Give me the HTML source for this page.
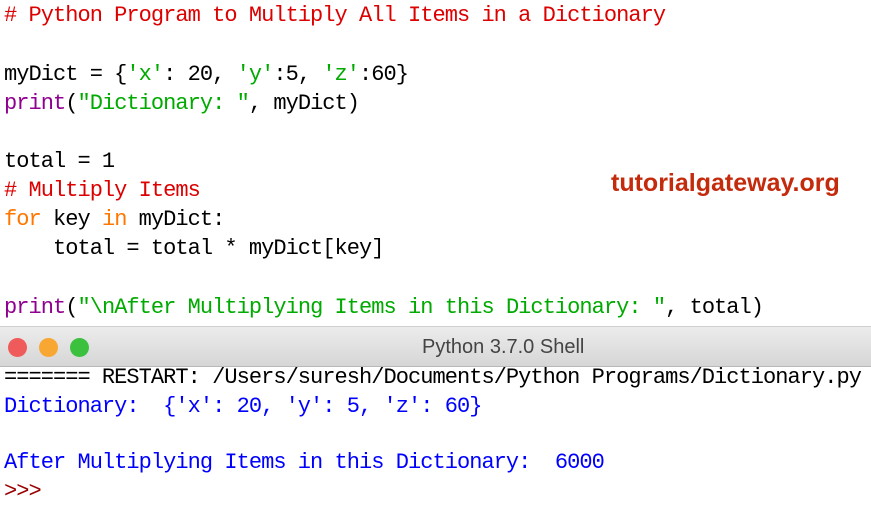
<!DOCTYPE html><html><head><style>
body{margin:0;width:871px;height:495px;overflow:hidden;background:#fff;position:relative;font-family:"Liberation Mono",monospace;font-size:22px;letter-spacing:-0.96px}
.l{position:absolute;left:4px;white-space:pre;line-height:29px}
.r{color:#dd0000}.k{color:#ff7700}.g{color:#00aa00}.p{color:#900090}.b{color:#0000ff}.d{color:#990000}
#bar{position:absolute;left:0;top:326px;width:871px;height:39px;background:linear-gradient(#ececec,#d6d6d6);border-top:1px solid #cfcfcf;border-bottom:1px solid #b8b8b8;letter-spacing:0}
.dot{position:absolute;top:11px;width:19px;height:19px;border-radius:50%}
#t{position:absolute;left:422px;top:9px;font-family:"Liberation Sans",sans-serif;font-size:20px;color:#444}
#logo{position:absolute;left:611px;top:169px;font-family:"Liberation Sans",sans-serif;font-weight:bold;font-size:25px;color:#c42a0c;letter-spacing:0}
</style></head><body>
<div class="l r" style="top:1px"># Python Program to Multiply All Items in a Dictionary</div>
<div class="l" style="top:60px">myDict = {<span class="g">'x'</span>: 20, <span class="g">'y'</span>:5, <span class="g">'z'</span>:60}</div>
<div class="l" style="top:89px"><span class="p">print</span>(<span class="g">"Dictionary: "</span>, myDict)</div>
<div class="l" style="top:147px">total = 1</div>
<div class="l r" style="top:176px"># Multiply Items</div>
<div class="l" style="top:205px"><span class="k">for</span> key <span class="k">in</span> myDict:</div>
<div class="l" style="top:234px">    total = total * myDict[key]</div>
<div class="l" style="top:293px"><span class="p">print</span>(<span class="g">"\nAfter Multiplying Items in this Dictionary: "</span>, total)</div>
<div id="logo">tutorialgateway.org</div>
<div id="bar"><div class="dot" style="left:8px;background:#ee5b5a"></div><div class="dot" style="left:39px;background:#f8a733"></div><div class="dot" style="left:70px;background:#3cc13f"></div><div id="t">Python 3.7.0 Shell</div></div>
<div class="l" style="top:363px">======= RESTART: /Users/suresh/Documents/Python Programs/Dictionary.py</div>
<div class="l b" style="top:392px">Dictionary:  {'x': 20, 'y': 5, 'z': 60}</div>
<div class="l b" style="top:448px">After Multiplying Items in this Dictionary:  6000</div>
<div class="l d" style="top:477px">&gt;&gt;&gt;</div>
</body></html>
